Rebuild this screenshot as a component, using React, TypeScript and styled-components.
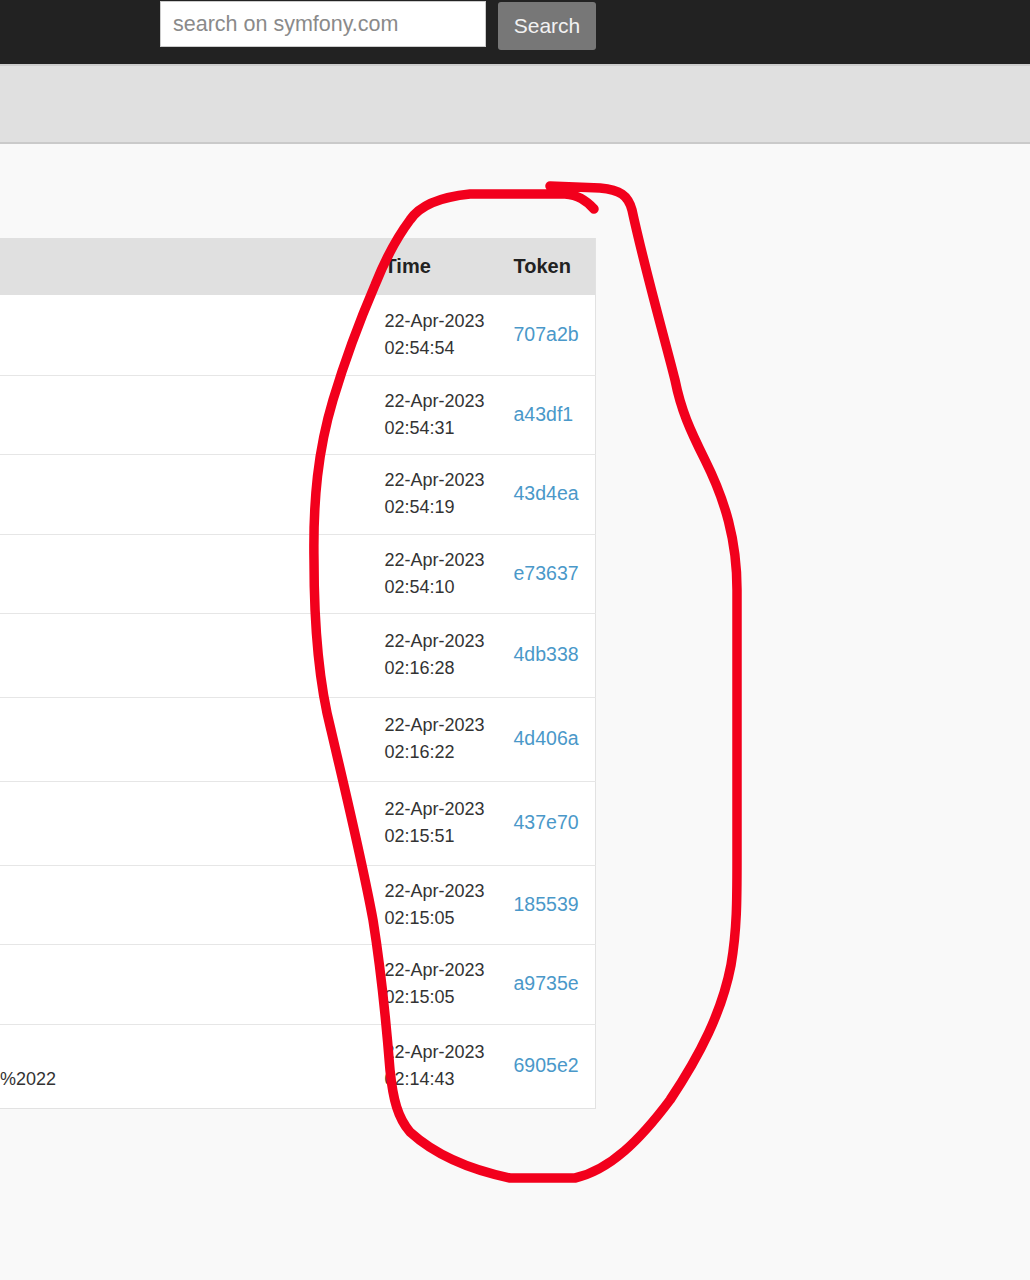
import React from "react";
import styled, { createGlobalStyle } from "styled-components";

const GlobalStyle = createGlobalStyle`
  html, body {
    margin: 0;
    padding: 0;
    background: #f9f9f9;
    font-family: "Liberation Sans", Arial, Helvetica, sans-serif;
  }
`;

const Page = styled.div`
  position: relative;
  width: 1030px;
  min-height: 1280px;
  overflow: hidden;
  background: #f9f9f9;
`;

const TopBar = styled.header`
  height: 64px;
  background: #222;
  display: flex;
  align-items: flex-start;
  gap: 12px;
  padding-left: 160px;
  box-sizing: border-box;
`;

const SearchInput = styled.input`
  box-sizing: border-box;
  width: 326px;
  height: 46px;
  margin-top: 1px;
  border: 1px solid #ccc;
  background: #fff;
  padding: 0 12px;
  font-family: inherit;
  font-size: 21.5px;
  color: #333;
  outline: none;

  &::placeholder {
    color: #8a8a8a;
  }
`;

const SearchButton = styled.button`
  width: 98px;
  height: 48px;
  margin-top: 2px;
  border: 0;
  border-radius: 3px;
  background: #777;
  color: #f2f2f2;
  font-family: inherit;
  font-size: 21px;
  cursor: pointer;
`;

const SubBar = styled.div`
  height: 76px;
  background: #e0e0e0;
  border-top: 2px solid #cdcdcd;
  border-bottom: 2px solid #cacaca;
`;

const Content = styled.main`
  padding-top: 94px;
`;

const Table = styled.table`
  width: 596px;
  table-layout: fixed;
  border-collapse: collapse;
  background: #fff;
  border-right: 1px solid #e2e2e2;
  border-bottom: 1px solid #e2e2e2;
`;

const HeadRow = styled.tr`
  background: #e0e0e0;
`;

const Th = styled.th<{ $width?: number }>`
  ${(p) => (p.$width ? `width: ${p.$width}px;` : "")}
  height: 57px;
  box-sizing: border-box;
  text-align: left;
  font-size: 20px;
  font-weight: bold;
  color: #222;
  padding: 0 0 0 10px;
  vertical-align: middle;
`;

const Row = styled.tr`
  border-bottom: 1px solid #e6e6e6;

  &:last-child {
    border-bottom: 0;
  }
`;

const Td = styled.td<{ $h: number }>`
  height: ${(p) => p.$h}px;
  padding: 0 0 0 10px;
  vertical-align: middle;
  font-size: 18px;
  line-height: 27px;
  color: #333;
  box-sizing: border-box;
`;

const UrlCell = styled(Td)`
  padding-left: 0;
  white-space: nowrap;
  overflow: hidden;
`;

const TokenLink = styled.a`
  color: #4a98c9;
  font-size: 19.5px;
  text-decoration: none;
`;

const Scribble = styled.svg`
  position: absolute;
  left: 0;
  top: 0;
  pointer-events: none;
`;

type Entry = { time: string; token: string; h: number; url?: string[] };

const entries: Entry[] = [
  { time: "02:54:54", token: "707a2b", h: 80 },
  { time: "02:54:31", token: "a43df1", h: 79 },
  { time: "02:54:19", token: "43d4ea", h: 80 },
  { time: "02:54:10", token: "e73637", h: 79 },
  { time: "02:16:28", token: "4db338", h: 84 },
  { time: "02:16:22", token: "4d406a", h: 84 },
  { time: "02:15:51", token: "437e70", h: 84 },
  { time: "02:15:05", token: "185539", h: 79 },
  { time: "02:15:05", token: "a9735e", h: 80 },
  { time: "02:14:43", token: "6905e2", h: 84, url: ["\u00a0", "%2022"] },
];

export default function App() {
  return (
    <Page>
      <GlobalStyle />
      <TopBar>
        <SearchInput placeholder="search on symfony.com" />
        <SearchButton>Search</SearchButton>
      </TopBar>
      <SubBar />
      <Content>
        <Table>
          <thead>
            <HeadRow>
              <Th />
              <Th $width={129}>Time</Th>
              <Th $width={92}>Token</Th>
            </HeadRow>
          </thead>
          <tbody>
            {entries.map((e) => (
              <Row key={e.token}>
                <UrlCell $h={e.h}>
                  {e.url?.map((line, j) => (
                    <div key={j}>{line}</div>
                  ))}
                </UrlCell>
                <Td $h={e.h}>
                  22-Apr-2023
                  <br />
                  {e.time}
                </Td>
                <Td $h={e.h}>
                  <TokenLink href="#">{e.token}</TokenLink>
                </Td>
              </Row>
            ))}
          </tbody>
        </Table>
      </Content>

      {/* hand-drawn red marker loop around the Time / Token columns */}
      <Scribble width="1030" height="1280" viewBox="0 0 1030 1280">
        <path
          d="M 594 209
             C 586 200, 578 195, 565 194
             L 470 194
             C 440 197, 420 205, 410 220
             C 395 240, 385 260, 375 285
             C 360 320, 345 360, 333 400
             C 318 450, 313 500, 314 560
             C 314 620, 318 680, 331 730
             C 345 790, 362 860, 373 920
             C 381 970, 386 1020, 390 1070
             C 393 1100, 398 1118, 410 1132
             C 432 1152, 462 1168, 510 1178
             L 575 1178
             C 610 1170, 640 1140, 670 1100
             C 700 1055, 722 1012, 731 965
             C 737 930, 737 900, 737 860
             L 737 590
             C 737 540, 725 500, 705 460
             C 690 430, 681 410, 675 380
             C 665 340, 645 270, 632 210
             C 628 195, 620 190, 600 188
             L 550 186"
          fill="none"
          stroke="#f2001c"
          strokeWidth="9.5"
          strokeLinecap="round"
          strokeLinejoin="round"
        />
      </Scribble>
    </Page>
  );
}
